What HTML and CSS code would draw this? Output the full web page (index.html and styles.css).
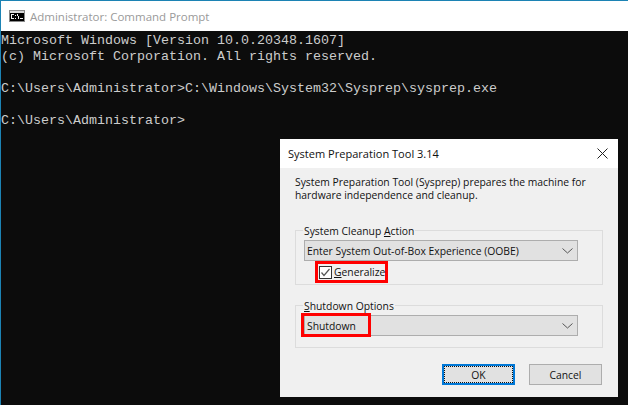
FILE: index.html
```html
<!DOCTYPE html>
<html lang="en">
<head>
<meta charset="utf-8">
<title>Administrator: Command Prompt</title>
<link rel="stylesheet" href="styles.css">
</head>
<body>
<div class="console">
  <div class="titlebar">
    <svg class="cmd-icon" width="16" height="12" viewBox="0 0 16 12">
      <rect x="0.5" y="0.5" width="15" height="11" fill="#000" stroke="#8a8a8a"/>
      <rect x="1" y="1" width="14" height="2" fill="#d8d8d8"/>
      <rect x="2" y="4" width="3" height="5" fill="#f0f0f0"/>
      <rect x="3" y="5" width="2" height="3" fill="#000"/>
      <rect x="6" y="5" width="1" height="1" fill="#f0f0f0"/>
      <rect x="6" y="8" width="1" height="1" fill="#f0f0f0"/>
      <rect x="8" y="4" width="1" height="2" fill="#f0f0f0"/>
      <rect x="9" y="6" width="1" height="3" fill="#f0f0f0"/>
      <rect x="11" y="8" width="3" height="1" fill="#f0f0f0"/>
    </svg>
    <span class="title-text">Administrator: Command Prompt</span>
  </div>
  <pre class="terminal">Microsoft Windows [Version 10.0.20348.1607]
(c) Microsoft Corporation. All rights reserved.

C:\Users\Administrator&gt;C:\Windows\System32\Sysprep\sysprep.exe

C:\Users\Administrator&gt;</pre>
</div>

<div class="dialog">
  <div class="dialog-title">
    <span>System Preparation Tool 3.14</span>
    <svg class="close" width="11" height="11" viewBox="0 0 11 11">
      <path d="M0.5 0.5L10.5 10.5M10.5 0.5L0.5 10.5" stroke="#222" stroke-width="1" fill="none"/>
    </svg>
  </div>
  <div class="dialog-body">
    <p class="intro">System Preparation Tool (Sysprep) prepares the machine for<br>hardware independence and cleanup.</p>

    <div class="group group-cleanup">
      <span class="legend">System Cleanup <u>A</u>ction</span>
      <div class="combo">
        <span>Enter System Out-of-Box Experience (OOBE)</span>
        <svg class="chev" width="11" height="6" viewBox="0 0 11 6"><path d="M0.5 0.5L5.5 5L10.5 0.5" stroke="#555" fill="none"/></svg>
      </div>
      <div class="check-row">
        <span class="red-box">
          <svg class="check" width="13" height="13" viewBox="0 0 13 13">
            <rect x="0.5" y="0.5" width="12" height="12" fill="#fff" stroke="#333"/>
            <path d="M2.5 6.5L5 9.5L10.5 3" stroke="#555" stroke-width="1.2" fill="none"/>
          </svg>
          <span class="check-label"><u>G</u>eneralize</span>
        </span>
      </div>
    </div>

    <div class="group group-shutdown">
      <span class="legend"><u>S</u>hutdown Options</span>
      <div class="combo">
        <span>Shutdown</span>
        <svg class="chev" width="11" height="6" viewBox="0 0 11 6"><path d="M0.5 0.5L5.5 5L10.5 0.5" stroke="#555" fill="none"/></svg>
      </div>
      <div class="red-overlay"></div>
    </div>

    <div class="buttons">
      <div class="btn btn-default"><span class="focus">OK</span></div>
      <div class="btn">Cancel</div>
    </div>
  </div>
</div>
</body>
</html>
```
FILE: styles.css
```css
* { box-sizing: border-box; }
html, body { margin: 0; padding: 0; }
body {
  width: 628px;
  height: 405px;
  overflow: hidden;
  position: relative;
  background: #0c0c0c;
  font-family: "Open Sans", "Noto Sans", sans-serif;
}
.console {
  height: 405px;
  border-top: 1px solid #1c83b4;
  border-left: 1px solid #1c83b4;
  display: flex;
  flex-direction: column;
}
.titlebar {
  height: 30px;
  flex: none;
  background: #fff;
  display: flex;
  align-items: center;
  padding-left: 8px;
  gap: 5px;
}
.cmd-icon { display: block; flex: none; }
.title-text {
  font-size: 11.5px;
  color: #9a9a9a;
  white-space: nowrap;
}
.terminal {
  margin: 0;
  flex: 1;
  padding: 2px 0 0 0;
  background: #0c0c0c;
  color: #cccccc;
  font-family: "Liberation Mono", monospace;
  font-size: 13.33px;
  line-height: 16px;
}
.dialog {
  position: absolute;
  left: 280px;
  top: 139px;
  width: 338px;
  height: 258px;
  background: #f0f0f0;
  display: flex;
  flex-direction: column;
  font-size: 10.35px;
  color: #111;
}
.dialog-title {
  height: 29px;
  flex: none;
  background: #fff;
  display: flex;
  align-items: center;
  justify-content: space-between;
  padding: 0 10px 0 8px;
  font-size: 11.05px;
}
.close { display: block; flex: none; }
.dialog-body {
  flex: 1;
  padding: 8px 15px 0 15px;
  display: flex;
  flex-direction: column;
}
.intro {
  margin: 0;
  line-height: 13px;
  height: 26px;
  white-space: nowrap;
}
.group {
  position: relative;
  width: 308px;
  border: 1px solid #dcdcdc;
  padding: 9px 24px 0 8px;
}
.group-cleanup { margin-top: 28px; height: 55px; }
.group-shutdown { margin-top: 20px; height: 43px; }
.legend {
  position: absolute;
  left: 7px;
  top: -8px;
  background: #f0f0f0;
  padding: 0 1px;
  line-height: 16px;
  white-space: nowrap;
}
.combo {
  height: 21px;
  background: #e1e1e1;
  border: 1px solid #adadad;
  display: flex;
  align-items: center;
  justify-content: space-between;
  padding: 0 4px 0 2px;
}
.chev { display: block; flex: none; }
.check-row {
  display: flex;
  padding-left: 11px;
}
.red-box {
  width: 73px;
  height: 22px;
  border: 3px solid #f00;
  display: flex;
  align-items: center;
  gap: 2px;
}
.check { display: block; flex: none; margin-left: 1px; }
.check-label { line-height: 14px; white-space: nowrap; }
.red-overlay {
  position: absolute;
  left: 5px;
  top: 7px;
  width: 70px;
  height: 24px;
  border: 3px solid #f00;
}
.buttons {
  display: flex;
  gap: 14px;
  margin-top: 16px;
  margin-left: 147px;
}
.btn {
  width: 73px;
  height: 21px;
  background: #e1e1e1;
  border: 1px solid #adadad;
  display: flex;
  align-items: center;
  justify-content: center;
}
.btn-default {
  border: 2px solid #0078d7;
}
.focus {
  width: 69px;
  height: 17px;
  border: 1px dotted #111;
  display: flex;
  align-items: center;
  justify-content: center;
}
```
